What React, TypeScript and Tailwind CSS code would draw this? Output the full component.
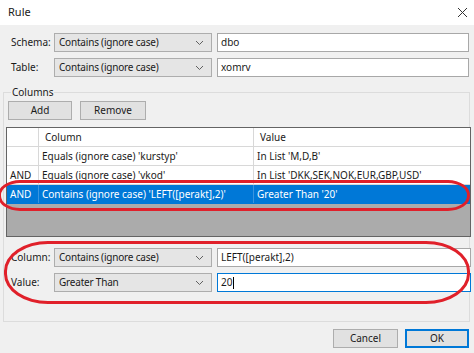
import * as React from "react";

const font = { fontFamily: '"Noto Sans", "Open Sans", Arial, sans-serif' };

function Chevron() {
  return (
    <svg width="9" height="6" viewBox="0 0 9 6" className="shrink-0">
      <polyline points="1,1 4.5,4.5 8,1" fill="none" stroke="#606060" strokeWidth="1" />
    </svg>
  );
}

function Combo({ text }: { text: string }) {
  return (
    <div className="flex h-[19px] w-[158px] shrink-0 items-center justify-between border border-[#adadad] bg-[#e5e5e5] pl-[4px] pr-[7px] text-[10px] tracking-[-0.2px] text-[#1a1a1a]">
      <span>{text}</span>
      <Chevron />
    </div>
  );
}

function TextBox({ text, focused }: { text: string; focused?: boolean }) {
  return (
    <div
      className={
        "ml-[5px] flex h-[19px] flex-1 items-center bg-white pl-[3px] text-[10px] text-[#1a1a1a] border " +
        (focused ? "border-[#0078d7]" : "border-[#a8a8a8]")
      }
    >
      <span>{text}</span>
      {focused && <span className="ml-px h-[12px] w-px bg-black" />}
    </div>
  );
}

function FieldRow({ label, combo, value, focused }: { label: string; combo: string; value: string; focused?: boolean }) {
  return (
    <div className="flex items-center">
      <span className="w-[43px] shrink-0 text-[10px] text-[#1a1a1a]">{label}</span>
      <Combo text={combo} />
      <TextBox text={value} focused={focused} />
    </div>
  );
}

function Btn({ label, w, primary }: { label: string; w: string; primary?: boolean }) {
  return (
    <div
      className={
        "flex h-[19px] items-center justify-center bg-[#e1e1e1] text-[10px] text-[#1a1a1a] border " +
        w +
        (primary ? " border-[#0078d7] border-2" : " border-[#adadad]")
      }
    >
      {label}
    </div>
  );
}

const rows = [
  { op: "", col: "Equals (ignore case) 'kurstyp'", val: "In List 'M,D,B'" },
  { op: "AND", col: "Equals (ignore case) 'vkod'", val: "In List 'DKK,SEK,NOK,EUR,GBP,USD'" },
  { op: "AND", col: "Contains (ignore case) 'LEFT([perakt],2)'", val: "Greater Than '20'", sel: true },
];

export default function App() {
  return (
    <div className="relative h-[353px] w-[474px] overflow-hidden bg-[#f0f0f0]" style={font}>
      {/* title bar */}
      <div className="flex h-[25px] items-center justify-between bg-white pl-[8px] pr-[6px]">
        <span className="text-[11px] text-[#1a1a1a]">Rule</span>
        <svg width="11" height="11" viewBox="0 0 11 11">
          <path d="M1 1 L10 10 M10 1 L1 10" stroke="#333" strokeWidth="1" />
        </svg>
      </div>

      <div className="flex flex-col pl-[11px] pr-[5px] pt-[8px]">
        <FieldRow label="Schema:" combo="Contains (ignore case)" value="dbo" />
        <div className="h-[6px]" />
        <FieldRow label="Table:" combo="Contains (ignore case)" value="xomrv" />
      </div>

      {/* Columns group box */}
      <div className="relative ml-[3px] mr-[4px] mt-[15px] h-[230px] border border-[#dcdcdc]">
        <span className="absolute left-[7px] top-[-8px] bg-[#f0f0f0] px-px text-[10px] leading-[14px] text-[#1a1a1a]">
          Columns
        </span>
        <div className="flex gap-[8px] pl-[4px] pt-[8px]">
          <Btn label="Add" w="w-[64px]" />
          <Btn label="Remove" w="w-[66px]" />
        </div>

        {/* grid */}
        <div className="ml-[2px] mr-[-2px] mt-[7px] flex h-[110px] flex-col border border-[#646464] bg-[#ababab] text-[10px] text-[#1a1a1a]">
          <div className="flex h-[19px] shrink-0 items-center border-b border-[#d8d8d8] bg-white">
            <div className="h-full w-[32px] border-r border-[#d8d8d8]" />
            <div className="flex h-full w-[215px] items-center border-r border-[#d8d8d8] pl-[6px]">Column</div>
            <div className="pl-[6px]">Value</div>
          </div>
          {rows.map((r, i) => (
            <div
              key={i}
              className={
                "flex h-[19px] shrink-0 items-center border-b " +
                (r.sel ? "bg-[#0078d7] text-white border-[#0078d7]" : "bg-white border-[#d8d8d8]")
              }
            >
              <div className={"flex h-full w-[32px] items-center border-r pl-[3px] " + (r.sel ? "border-[#3a95e0]" : "border-[#d8d8d8]")}>
                {r.op}
              </div>
              <div className={"flex h-full w-[215px] items-center border-r pl-[3px] " + (r.sel ? "border-[#3a95e0]" : "border-[#d8d8d8]")}>
                {r.col}
              </div>
              <div className="pl-[3px]">{r.val}</div>
            </div>
          ))}
        </div>

        <div className="flex flex-col pl-[7px] pt-[11px]">
          <div className="mr-[-2px]">
            <FieldRow label="Column:" combo="Contains (ignore case)" value="LEFT([perakt],2)" />
          </div>
          <div className="h-[6px]" />
          <div className="mr-[-2px]">
            <FieldRow label="Value:" combo="Greater Than" value="20" focused />
          </div>
        </div>
      </div>

      <div className="mt-[7px] flex justify-end gap-[7px] pr-[5px]">
        <Btn label="Cancel" w="w-[65px]" />
        <Btn label="OK" w="w-[64px]" primary />
      </div>

      {/* red annotation ellipses */}
      <div className="pointer-events-none absolute left-[-2px] top-[180px] h-[31px] w-[472px] rounded-[22px/15px] border-[3px] border-[#e0202a]" />
      <div className="pointer-events-none absolute left-[4px] top-[241px] h-[63px] w-[466px] rounded-[44px/30px] border-[3px] border-[#e0202a]" />
    </div>
  );
}
